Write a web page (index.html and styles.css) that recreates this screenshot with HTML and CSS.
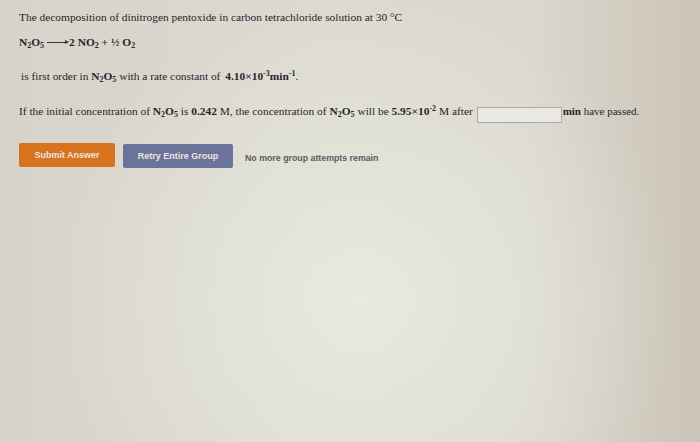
FILE: index.html
```html
<!DOCTYPE html>
<html>
<head>
<meta charset="utf-8">
<link rel="stylesheet" href="styles.css">
</head>
<body>
<div class="page">
  <p class="line l1">The decomposition of dinitrogen pentoxide in carbon tetrachloride solution at 30 °C</p>
  <p class="line l2 eq"><b>N<sub>2</sub>O<sub>5</sub></b><span class="arrow"></span><b>2 NO<sub>2</sub> + ½ O<sub>2</sub></b></p>
  <p class="line l3">is first order in <b>N<sub>2</sub>O<sub>5</sub></b> with a rate constant of <b class="k">4.10×10<sup>-3</sup>min<sup>-1</sup></b>.</p>
  <p class="line l4">If the initial concentration of <b>N<sub>2</sub>O<sub>5</sub></b> is <b>0.242</b> M, the concentration of <b>N<sub>2</sub>O<sub>5</sub></b> will be <b>5.95×10<sup>-2</sup></b> M after <input class="answer" type="text"><span class="tail"><b>min</b> have passed.</span></p>
  <div class="actions">
    <button class="btn submit">Submit Answer</button>
    <button class="btn retry">Retry Entire Group</button>
    <span class="note">No more group attempts remain</span>
  </div>
</div>
</body>
</html>
```
FILE: styles.css
```css
html, body {
  margin: 0;
  height: 100%;
}
body {
  background:
    radial-gradient(ellipse 320px 300px at 360px 300px, rgba(232,236,224,0.9), rgba(232,236,224,0) 100%),
    linear-gradient(90deg, #d8d3ca 0%, #ddd9d0 45%, #dcd8ce 75%, #cbc4b8 100%);
  font-family: "Liberation Serif", "Times New Roman", serif;
  color: #26262a;
}
.page {
  padding: 10px 0 0 19px;
}
.line {
  margin: 0;
  font-size: 11.4px;
  line-height: 14px;
  height: 14px;
}
.l1 { margin-bottom: 11px; }
.l2 { margin-bottom: 20px; }
.l3 { margin-bottom: 21px; padding-left: 2px; }
.l4 { margin-bottom: 23px; }
.k { margin-left: 2px; }
.tail { font-size: 11px; margin-left: 1px; }
sub, sup { font-size: 8px; line-height: 0; }
sub { vertical-align: -2px; }
sup { vertical-align: 4px; }
.arrow {
  display: inline-block;
  width: 21px;
  height: 1px;
  background: #333;
  vertical-align: 3px;
  position: relative;
  margin: 0 1px 0 3px;
}
.arrow::after {
  content: "";
  position: absolute;
  right: -1px;
  top: -2px;
  border-left: 4px solid #333;
  border-top: 2.5px solid transparent;
  border-bottom: 2.5px solid transparent;
}
.answer {
  width: 83px;
  height: 14px;
  padding: 0;
  border: 1px solid #a9aaa8;
  background: #e9e8e2;
  vertical-align: -4px;
  margin: 0 0 0 1px;
}
.actions {
  display: flex;
  align-items: center;
  gap: 8px;
  font-family: "Liberation Sans", Arial, sans-serif;
}
.btn {
  font-family: "Liberation Sans", Arial, sans-serif;
  font-weight: bold;
  font-size: 9px;
  color: #ece6e0;
  border: none;
  border-radius: 2px;
  height: 24px;
  padding: 0;
}
.submit {
  background: #d5731f;
  width: 96px;
}
.retry {
  background: #6a7399;
  width: 110px;
  height: 24px;
  margin-top: 3px;
}
.note {
  margin-left: 4px;
  font-size: 8.8px;
  font-weight: bold;
  color: #5a5c63;
  margin-top: 6px;
}
```
